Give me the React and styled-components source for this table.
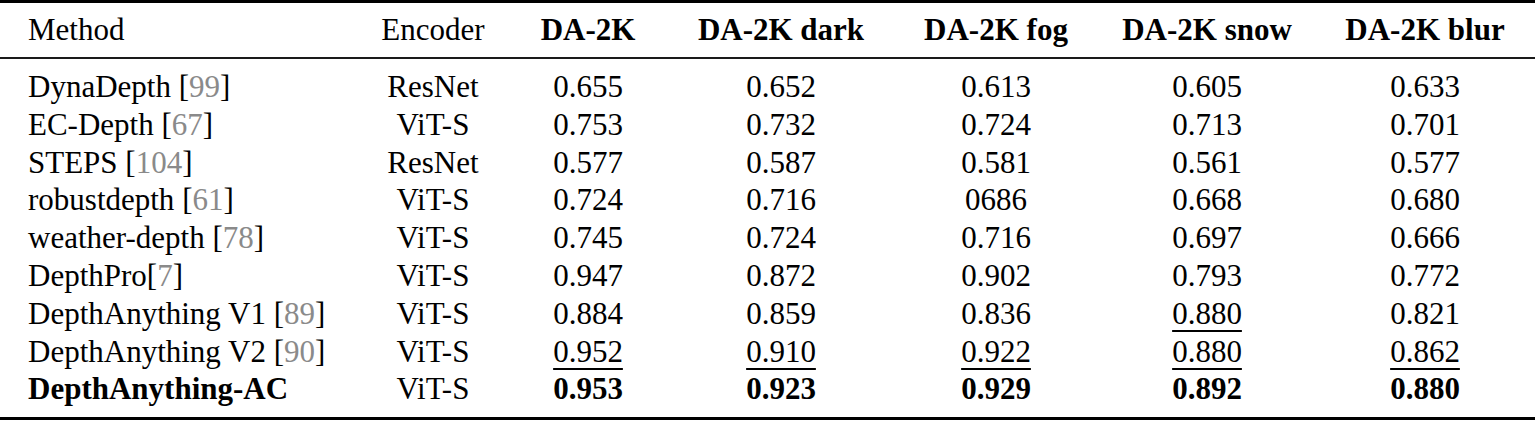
import React from 'react'
import styled, { createGlobalStyle } from 'styled-components'

const GlobalStyle = createGlobalStyle`
  body {
    margin: 0;
    background: #fff;
  }
`

const Table = styled.table`
  width: 1535px;
  table-layout: fixed;
  border-collapse: collapse;
  font-family: "Liberation Serif", "Times New Roman", serif;
  font-size: 31px;
  color: #000;
`

const HeadRow = styled.tr`
  border-top: 3px solid #000;
  border-bottom: 2px solid #1a1a1a;
`

const Row = styled.tr`
  border-bottom: ${p => (p.$last ? '3px solid #000' : 'none')};
`

const Th = styled.th`
  font-weight: ${p => (p.$bold ? 700 : 400)};
  text-align: ${p => (p.$left ? 'left' : 'center')};
  padding: 9px 0 9px ${p => (p.$left ? '28px' : '0')};
  line-height: 36px;
  white-space: nowrap;
`

const Td = styled.td`
  font-weight: ${p => (p.$bold ? 700 : 400)};
  text-align: ${p => (p.$left ? 'left' : 'center')};
  padding: ${p => (p.$first ? '9px' : '0')} 0 ${p => (p.$last ? '9px' : '0')} ${p => (p.$left ? '28px' : '0')};
  line-height: 37.8px;
  white-space: nowrap;
`

const Cite = styled.span`
  color: #8a8a8a;
`

const Second = styled.span`
  text-decoration: underline;
  text-decoration-thickness: 1.5px;
  text-underline-offset: 6px;
`

const widths = [359, 148, 162, 224, 206, 216, 220]

const headers = ['DA-2K', 'DA-2K dark', 'DA-2K fog', 'DA-2K snow', 'DA-2K blur']

// u = underlined (second best)
const rows = [
  { name: 'DynaDepth', sep: ' ', cite: '99', enc: 'ResNet', vals: ['0.655', '0.652', '0.613', '0.605', '0.633'] },
  { name: 'EC-Depth', sep: ' ', cite: '67', enc: 'ViT-S', vals: ['0.753', '0.732', '0.724', '0.713', '0.701'] },
  { name: 'STEPS', sep: ' ', cite: '104', enc: 'ResNet', vals: ['0.577', '0.587', '0.581', '0.561', '0.577'] },
  { name: 'robustdepth', sep: ' ', cite: '61', enc: 'ViT-S', vals: ['0.724', '0.716', '0686', '0.668', '0.680'] },
  { name: 'weather-depth', sep: ' ', cite: '78', enc: 'ViT-S', vals: ['0.745', '0.724', '0.716', '0.697', '0.666'] },
  { name: 'DepthPro', sep: '', cite: '7', enc: 'ViT-S', vals: ['0.947', '0.872', '0.902', '0.793', '0.772'] },
  { name: 'DepthAnything V1', sep: ' ', cite: '89', enc: 'ViT-S', vals: ['0.884', '0.859', '0.836', '0.880', '0.821'], u: [3] },
  { name: 'DepthAnything V2', sep: ' ', cite: '90', enc: 'ViT-S', vals: ['0.952', '0.910', '0.922', '0.880', '0.862'], u: [0, 1, 2, 3, 4] },
  { name: 'DepthAnything-AC', enc: 'ViT-S', vals: ['0.953', '0.923', '0.929', '0.892', '0.880'], bold: true },
]

export default function App() {
  return (
    <>
      <GlobalStyle />
      <Table>
        <colgroup>
          {widths.map((w, i) => <col key={i} style={{ width: w }} />)}
        </colgroup>
        <thead>
          <HeadRow>
            <Th $left>Method</Th>
            <Th>Encoder</Th>
            {headers.map(h => <Th key={h} $bold>{h}</Th>)}
          </HeadRow>
        </thead>
        <tbody>
          {rows.map((r, i) => {
            const first = i === 0
            const last = i === rows.length - 1
            return (
              <Row key={r.name} $last={last}>
                <Td $left $first={first} $last={last} $bold={r.bold}>
                  {r.name}
                  {r.cite && <>{r.sep}[<Cite>{r.cite}</Cite>]</>}
                </Td>
                <Td $first={first} $last={last}>{r.enc}</Td>
                {r.vals.map((v, j) => (
                  <Td key={j} $first={first} $last={last} $bold={r.bold}>
                    {r.u && r.u.includes(j) ? <Second>{v}</Second> : v}
                  </Td>
                ))}
              </Row>
            )
          })}
        </tbody>
      </Table>
    </>
  )
}
